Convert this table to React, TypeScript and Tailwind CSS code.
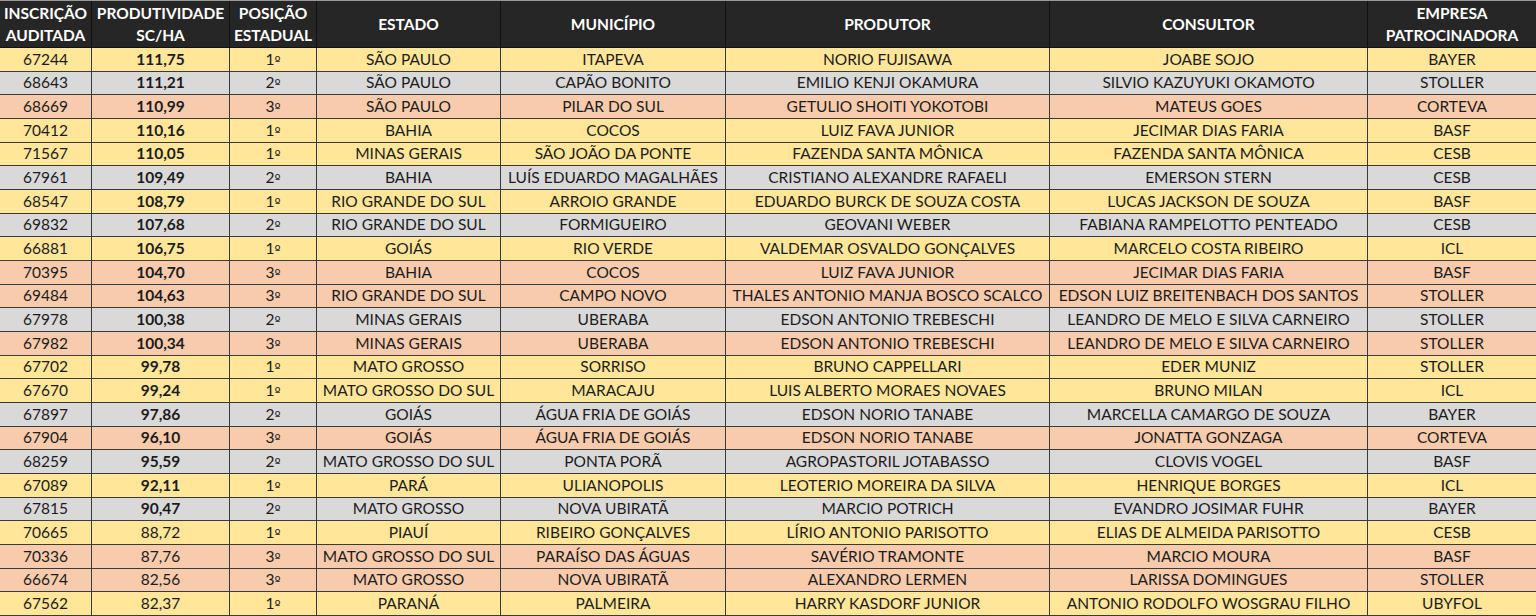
import React from "react";

type Row = [string, string, string, string, string, string, string, string];

const rows: Row[] = [
  ["67244", "111,75", "1º", "SÃO PAULO", "ITAPEVA", "NORIO FUJISAWA", "JOABE SOJO", "BAYER"],
  ["68643", "111,21", "2º", "SÃO PAULO", "CAPÃO BONITO", "EMILIO KENJI OKAMURA", "SILVIO KAZUYUKI OKAMOTO", "STOLLER"],
  ["68669", "110,99", "3º", "SÃO PAULO", "PILAR DO SUL", "GETULIO SHOITI YOKOTOBI", "MATEUS GOES", "CORTEVA"],
  ["70412", "110,16", "1º", "BAHIA", "COCOS", "LUIZ FAVA JUNIOR", "JECIMAR DIAS FARIA", "BASF"],
  ["71567", "110,05", "1º", "MINAS GERAIS", "SÃO JOÃO DA PONTE", "FAZENDA SANTA MÔNICA", "FAZENDA SANTA MÔNICA", "CESB"],
  ["67961", "109,49", "2º", "BAHIA", "LUÍS EDUARDO MAGALHÃES", "CRISTIANO ALEXANDRE RAFAELI", "EMERSON STERN", "CESB"],
  ["68547", "108,79", "1º", "RIO GRANDE DO SUL", "ARROIO GRANDE", "EDUARDO BURCK DE SOUZA COSTA", "LUCAS JACKSON DE SOUZA", "BASF"],
  ["69832", "107,68", "2º", "RIO GRANDE DO SUL", "FORMIGUEIRO", "GEOVANI WEBER", "FABIANA RAMPELOTTO PENTEADO", "CESB"],
  ["66881", "106,75", "1º", "GOIÁS", "RIO VERDE", "VALDEMAR OSVALDO GONÇALVES", "MARCELO COSTA RIBEIRO", "ICL"],
  ["70395", "104,70", "3º", "BAHIA", "COCOS", "LUIZ FAVA JUNIOR", "JECIMAR DIAS FARIA", "BASF"],
  ["69484", "104,63", "3º", "RIO GRANDE DO SUL", "CAMPO NOVO", "THALES ANTONIO MANJA BOSCO SCALCO", "EDSON LUIZ BREITENBACH DOS SANTOS", "STOLLER"],
  ["67978", "100,38", "2º", "MINAS GERAIS", "UBERABA", "EDSON ANTONIO TREBESCHI", "LEANDRO DE MELO E SILVA CARNEIRO", "STOLLER"],
  ["67982", "100,34", "3º", "MINAS GERAIS", "UBERABA", "EDSON ANTONIO TREBESCHI", "LEANDRO DE MELO E SILVA CARNEIRO", "STOLLER"],
  ["67702", "99,78", "1º", "MATO GROSSO", "SORRISO", "BRUNO CAPPELLARI", "EDER MUNIZ", "STOLLER"],
  ["67670", "99,24", "1º", "MATO GROSSO DO SUL", "MARACAJU", "LUIS ALBERTO MORAES NOVAES", "BRUNO MILAN", "ICL"],
  ["67897", "97,86", "2º", "GOIÁS", "ÁGUA FRIA DE GOIÁS", "EDSON NORIO TANABE", "MARCELLA CAMARGO DE SOUZA", "BAYER"],
  ["67904", "96,10", "3º", "GOIÁS", "ÁGUA FRIA DE GOIÁS", "EDSON NORIO TANABE", "JONATTA GONZAGA", "CORTEVA"],
  ["68259", "95,59", "2º", "MATO GROSSO DO SUL", "PONTA PORÃ", "AGROPASTORIL JOTABASSO", "CLOVIS VOGEL", "BASF"],
  ["67089", "92,11", "1º", "PARÁ", "ULIANOPOLIS", "LEOTERIO MOREIRA DA SILVA", "HENRIQUE BORGES", "ICL"],
  ["67815", "90,47", "2º", "MATO GROSSO", "NOVA UBIRATÃ", "MARCIO POTRICH", "EVANDRO JOSIMAR FUHR", "BAYER"],
  ["70665", "88,72", "1º", "PIAUÍ", "RIBEIRO GONÇALVES", "LÍRIO ANTONIO PARISOTTO", "ELIAS DE ALMEIDA PARISOTTO", "CESB"],
  ["70336", "87,76", "3º", "MATO GROSSO DO SUL", "PARAÍSO DAS ÁGUAS", "SAVÉRIO TRAMONTE", "MARCIO MOURA", "BASF"],
  ["66674", "82,56", "3º", "MATO GROSSO", "NOVA UBIRATÃ", "ALEXANDRO LERMEN", "LARISSA DOMINGUES", "STOLLER"],
  ["67562", "82,37", "1º", "PARANÁ", "PALMEIRA", "HARRY KASDORF JUNIOR", "ANTONIO RODOLFO WOSGRAU FILHO", "UBYFOL"],
];

const headers: string[][] = [
  ["INSCRIÇÃO", "AUDITADA"],
  ["PRODUTIVIDADE", "SC/HA"],
  ["POSIÇÃO", "ESTADUAL"],
  ["ESTADO"],
  ["MUNICÍPIO"],
  ["PRODUTOR"],
  ["CONSULTOR"],
  ["EMPRESA", "PATROCINADORA"],
];

function bgFor(pos: string) {
  if (pos === "1º") return "bg-[#ffe699]";
  if (pos === "2º") return "bg-[#d9d9d9]";
  return "bg-[#f8cbad]";
}

function Cell({ text, col, rowIdx }: { text: string; col: number; rowIdx: number }) {
  if (col === 2) {
    return (
      <span>
        {text.slice(0, 1)}
        <span className="font-['DejaVu_Sans'] text-[13px]">º</span>
      </span>
    );
  }
  return <span className={col === 1 && rowIdx < 20 ? "font-bold" : ""}>{text}</span>;
}

export default function App() {
  return (
    <div className="w-[1536px] h-[616px] overflow-hidden bg-white border-t border-[#9a9a9a] font-['Lato',sans-serif]">
      <div className="grid h-[615px] grid-cols-[92px_138px_87px_184px_225px_324px_318px_168px] grid-rows-[47px_repeat(24,minmax(0,1fr))]">
        {headers.map((h, i) => (
          <div
            key={"h" + i}
            className={`flex flex-col items-center justify-center bg-[#262626] text-white font-bold text-[15.5px] leading-[22px] border-b border-[#111] ${i < 7 ? "border-r border-r-[#111]" : ""}`}
          >
            {h.map((t) => (
              <span key={t}>{t}</span>
            ))}
          </div>
        ))}
        {rows.map((r, ri) =>
          r.map((c, ci) => (
            <div
              key={ri + "-" + ci}
              className={`flex items-center justify-center whitespace-nowrap text-[15.5px] text-[#1c1c1c] border-b border-[#3a3a3a] ${bgFor(r[2])} ${ci < 7 ? "border-r" : ""}`}
            >
              <Cell text={c} col={ci} rowIdx={ri} />
            </div>
          ))
        )}
      </div>
    </div>
  );
}
